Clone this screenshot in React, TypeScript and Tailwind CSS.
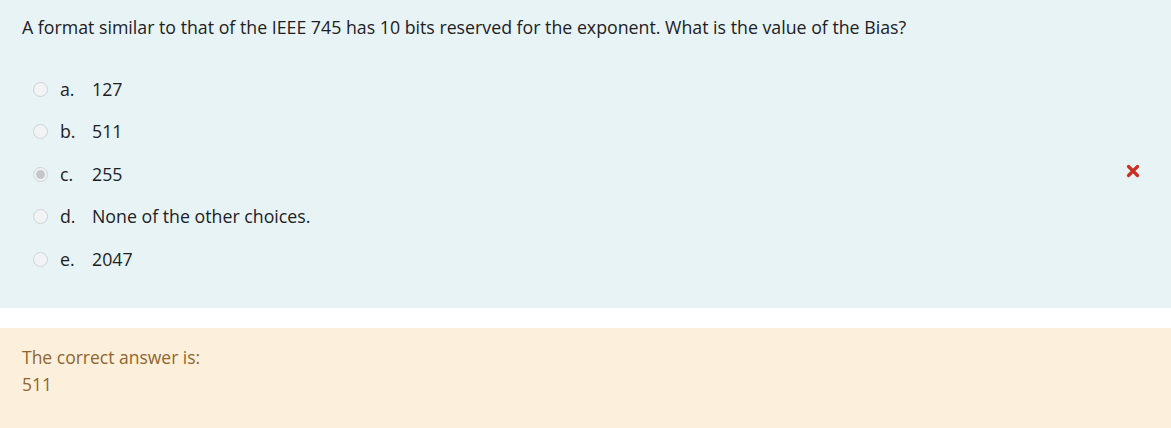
import React from "react";

const options = [
  { l: "a.", t: "127", checked: false },
  { l: "b.", t: "511", checked: false },
  { l: "c.", t: "255", checked: true, wrong: true },
  { l: "d.", t: "None of the other choices.", checked: false },
  { l: "e.", t: "2047", checked: false },
];

function Radio({ checked }: { checked: boolean }) {
  return (
    <span className="flex h-[15px] w-[15px] items-center justify-center rounded-full border border-[#cfd2d4] bg-[#f1f3f4]">
      {checked && <span className="h-[9px] w-[9px] rounded-full bg-[#c4c7ca]" />}
    </span>
  );
}

export default function App() {
  return (
    <div
      className="w-[1171px] bg-white text-[#1d2125]"
      style={{ fontFamily: '"Open Sans", "Noto Sans", sans-serif' }}
    >
      <div className="bg-[#e7f3f5] px-[22px] pt-[14px] pb-[27px] text-[17.75px] leading-[27px]">
        <div>A format similar to that of the IEEE 745 has 10 bits reserved for the exponent. What is the value of the Bias?</div>
        <div className="mt-[27px]">
          {options.map((o) => (
            <div key={o.l} className="flex h-[42.5px] items-center">
              <span className="ml-[11px] mr-[12px]">
                <Radio checked={o.checked} />
              </span>
              <span className="w-[32px]">{o.l}</span>
              <span className="flex-1">{o.t}</span>
              {o.wrong && (
                <svg width="14" height="14" viewBox="0 0 14 14" className="mr-[9px] mb-[7px]">
                  <path d="M2.5 2.5 L11.5 11.5 M11.5 2.5 L2.5 11.5" stroke="#ca3120" strokeWidth="3.2" strokeLinecap="round" />
                </svg>
              )}
            </div>
          ))}
        </div>
      </div>
      <div className="h-[20px]" />
      <div className="bg-[#fcefdc] px-[22px] pt-[16px] pb-[30px] text-[17.5px] leading-[27px] text-[#8e662e]">
        <div>The correct answer is:</div>
        <div>511</div>
      </div>
    </div>
  );
}
